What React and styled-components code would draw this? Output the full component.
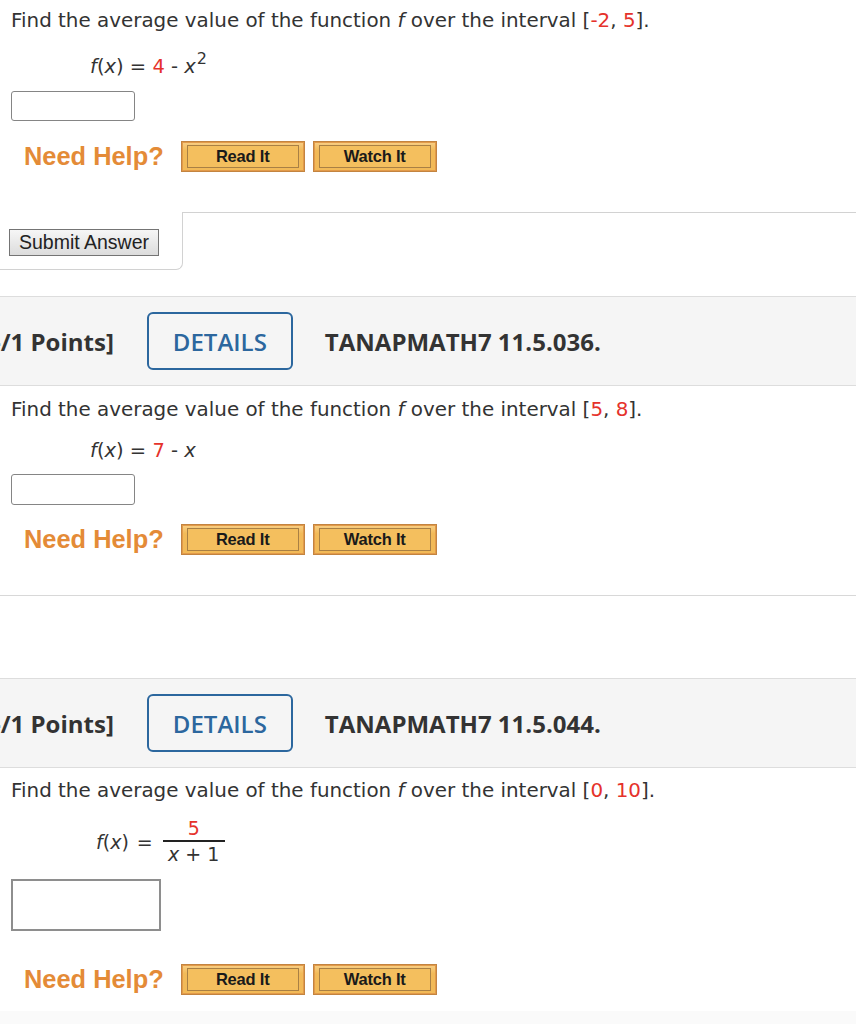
import React from "react"
import styled, { createGlobalStyle } from "styled-components"

const GlobalStyle = createGlobalStyle`
body {
    margin: 0;
    background: #fff;
    overflow: hidden;
}
`

const RED = '#e5322b'

export default function App() {
    return (
        <Page>
            <GlobalStyle />
            <Body>
                <Prompt top={9}>Find the average value of the function <i>f</i> over the interval [<Red>-2</Red>, <Red>5</Red>].</Prompt>
                <Formula top={22}>
                    <i>f</i>(<i>x</i>) = <Red>4</Red> - <i>x</i><sup>2</sup>
                </Formula>
                <Answer top={12} w={124} h={30} />
                <Help top={20} />
            </Body>
            <SubmitArea>
                <SubmitCell>
                    <SubmitButton>Submit Answer</SubmitButton>
                </SubmitCell>
                <SubmitRest />
            </SubmitArea>

            <Header top={26} code="TANAPMATH7 11.5.036." />
            <Body>
                <Prompt top={12}>Find the average value of the function <i>f</i> over the interval [<Red>5</Red>, <Red>8</Red>].</Prompt>
                <Formula top={17}>
                    <i>f</i>(<i>x</i>) = <Red>7</Red> - <i>x</i>
                </Formula>
                <Answer top={11} w={124} h={31} />
                <Help top={19} />
            </Body>
            <Divider top={40} />

            <Header top={82} code="TANAPMATH7 11.5.044." />
            <Body>
                <Prompt top={11}>Find the average value of the function <i>f</i> over the interval [<Red>0</Red>, <Red>10</Red>].</Prompt>
                <FracFormula>
                    <span><i>f</i>(<i>x</i>)</span>
                    <Equals>=</Equals>
                    <Fraction>
                        <Numerator>5</Numerator>
                        <Denominator><i>x</i> + 1</Denominator>
                    </Fraction>
                </FracFormula>
                <Answer top={13} w={150} h={52} square />
                <Help top={33} />
            </Body>
            <Footer />
        </Page>
    )
}

function Help({ top }) {
    return (
        <HelpRow top={top}>
            <NeedHelp>Need Help?</NeedHelp>
            <HelpButton><span>Read It</span></HelpButton>
            <HelpButton><span>Watch It</span></HelpButton>
        </HelpRow>
    )
}

function Header({ top, code }) {
    return (
        <Band top={top}>
            <Points>[-/1 Points]</Points>
            <Details>DETAILS</Details>
            <Code>{code}</Code>
        </Band>
    )
}

const Page = styled.div`
width: 856px;
height: 1024px;
overflow: hidden;
display: flex;
flex-direction: column;
`

const Body = styled.div`
display: flex;
flex-direction: column;
align-items: flex-start;
font-family: "DejaVu Sans", Verdana, sans-serif;
color: #333;
`

const Red = styled.span`
color: ${RED};
`

const Prompt = styled.div`
margin: ${p => p.top}px 0 0 11px;
font-size: 19.9px;
line-height: 24px;
white-space: nowrap;
`

const Formula = styled.div`
margin: ${p => p.top}px 0 0 90px;
font-size: 19.5px;
line-height: 24px;
white-space: pre;

sup {
    font-size: 16px;
    line-height: 0;
    vertical-align: 9px;
    margin-left: 1px;
}
`

const FracFormula = styled.div`
display: flex;
align-items: center;
gap: 8px;
margin: 14px 0 0 96px;
font-size: 19px;
`

const Equals = styled.span`
margin-right: 2px;
`

const Fraction = styled.span`
display: inline-flex;
flex-direction: column;
align-items: center;
width: 62px;
`

const Numerator = styled.span`
color: ${RED};
line-height: 22px;
padding-bottom: 1px;
border-bottom: 2px solid #222;
width: 100%;
text-align: center;
`

const Denominator = styled.span`
line-height: 24px;
`

const Answer = styled.input`
box-sizing: border-box;
margin: ${p => p.top}px 0 0 11px;
width: ${p => p.w}px;
height: ${p => p.h}px;
border: ${p => p.square ? '2px solid #8e8e8e' : '1px solid #858585'};
border-radius: ${p => p.square ? '0' : '3px'};
background: #fff;
padding: 0;
`

const HelpRow = styled.div`
display: flex;
align-items: center;
margin: ${p => p.top}px 0 0 24px;
`

const NeedHelp = styled.span`
font-family: "Liberation Sans", Arial, sans-serif;
font-weight: 700;
font-size: 25.4px;
color: #e48b37;
margin-right: 17px;
`

const HelpButton = styled.button`
box-sizing: border-box;
width: 124px;
height: 31px;
margin-right: 8px;
padding: 3px 5px;
border: 1px solid #c38440;
background: linear-gradient(#f8d088, #f2ba58 30%, #f2ba58);
box-shadow: inset 0 0 0 1px #e29a4a;
display: flex;

span {
    flex: 1;
    display: flex;
    align-items: center;
    justify-content: center;
    border: 1px solid #a98044;
    background: #f4bf5e;
    font-family: "Liberation Sans", Arial, sans-serif;
    font-weight: 700;
    font-size: 16.5px;
    letter-spacing: -0.2px;
    color: #1a1a1a;
}
`

const SubmitArea = styled.div`
display: flex;
margin-top: 40px;
height: 58px;
`

const SubmitCell = styled.div`
box-sizing: border-box;
width: 183px;
padding: 17px 0 0 9px;
border-right: 1px solid #d2d2d2;
border-bottom: 1px solid #d2d2d2;
border-bottom-right-radius: 7px;
`

const SubmitRest = styled.div`
flex: 1;
border-top: 1px solid #d2d2d2;
`

const SubmitButton = styled.button`
box-sizing: border-box;
width: 150px;
height: 27px;
padding: 0;
border: 1px solid #747474;
background: linear-gradient(#f6f6f6, #dcdcdc);
font-family: "Liberation Sans", Arial, sans-serif;
font-size: 19.5px;
color: #222;
`

const Band = styled.div`
box-sizing: border-box;
margin-top: ${p => p.top}px;
height: 90px;
flex-shrink: 0;
display: flex;
align-items: center;
background: #f5f5f5;
border-top: 1px solid #dddddd;
border-bottom: 1px solid #dddddd;
font-family: "Open Sans", sans-serif;
color: #333;
`

const Points = styled.span`
margin-left: -15px;
font-size: 24px;
font-weight: 700;
white-space: nowrap;
`

const Details = styled.span`
box-sizing: border-box;
width: 146px;
height: 58px;
margin-left: 33px;
display: flex;
align-items: center;
justify-content: center;
border: 2px solid #2c679e;
border-radius: 6px;
color: #2c679e;
font-size: 24px;
font-weight: 600;
`

const Code = styled.span`
margin-left: 32px;
font-size: 24px;
font-weight: 700;
white-space: nowrap;
`

const Divider = styled.div`
margin-top: ${p => p.top}px;
height: 1px;
flex-shrink: 0;
background: #d8d8d8;
`

const Footer = styled.div`
margin-top: 16px;
flex: 1;
background: #fafafa;
`
